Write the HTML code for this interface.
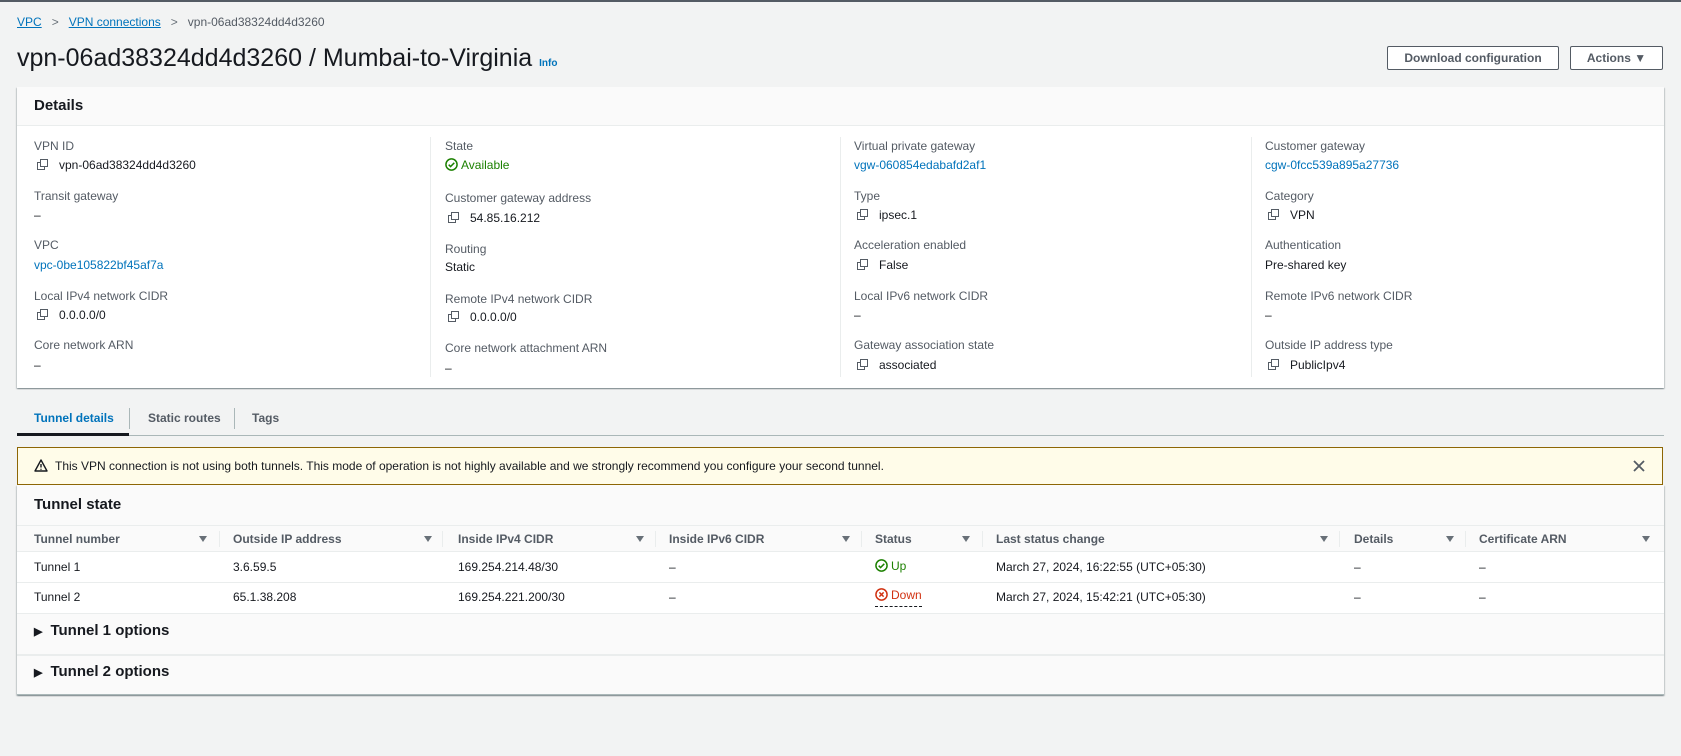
<!DOCTYPE html>
<html><head><meta charset="utf-8"><style>
*{box-sizing:border-box;margin:0;padding:0}
body{width:1681px;height:756px;background:#f2f3f3;font-family:"Liberation Sans",sans-serif;font-size:12px;color:#16191f;position:relative;overflow:hidden}
.a{position:absolute;white-space:nowrap;line-height:20px}
.lbl{color:#545b64}
.lnk{color:#0073bb}
.b{font-weight:bold}
.panel{position:absolute;background:#fff;box-shadow:0 1px 1px 0 rgba(0,28,36,.3),1px 1px 1px 0 rgba(0,28,36,.15),-1px 1px 1px 0 rgba(0,28,36,.15)}
.vl{position:absolute;width:1px;background:#eaeded}
.hl{position:absolute;height:1px;background:#eaeded}
.cp{display:inline-block;width:11px;height:11px;position:relative;margin-right:11px;vertical-align:-1px}
.cp:before{content:"";position:absolute;left:0;top:3px;width:6px;height:6px;border:1.5px solid #545b64}
.cp:after{content:"";position:absolute;left:3px;top:0;width:6px;height:6px;border:1.5px solid #545b64;background:#fff}
.btn{position:absolute;border:1px solid #545b64;border-radius:2px;background:#fff;font-weight:bold;color:#545b64;text-align:center;line-height:22px;font-size:12px}
.tri{position:absolute;width:0;height:0;border-left:4px solid transparent;border-right:4px solid transparent;border-top:6px solid #687078}
.th{position:absolute;top:529px;line-height:20px;font-weight:bold;color:#545b64}
</style></head><body>
<div style="position:absolute;left:0;top:0;width:1681px;height:2px;background:#545b64"></div>
<div class="a" style="left:17px;top:12px;font-size:12px"><span class="lnk" style="text-decoration:underline">VPC</span><span style="color:#687078;margin:0 10px">&gt;</span><span class="lnk" style="text-decoration:underline">VPN connections</span><span style="color:#687078;margin:0 10px">&gt;</span><span style="color:#545b64">vpn-06ad38324dd4d3260</span></div>
<div class="a" style="left:17px;top:43px;font-size:25px;line-height:30px">vpn-06ad38324dd4d3260 / Mumbai-to-Virginia <span class="lnk b" style="font-size:10px">Info</span></div>
<div class="btn" style="left:1387px;top:46px;width:172px;height:24px">Download configuration</div>
<div class="btn" style="left:1570px;top:46px;width:93px;height:24px">Actions &#9660;</div>

<div class="panel" style="left:17px;top:87px;width:1647px;height:301px"></div>
<div style="position:absolute;left:17px;top:87px;width:1647px;height:39px;background:#fafafa;border-bottom:1px solid #eaeded"></div>
<div class="a b" style="left:34px;top:95px;font-size:15px;line-height:22px">Details</div>
<div class="vl" style="left:430px;top:137px;height:240px"></div>
<div class="vl" style="left:840px;top:137px;height:240px"></div>
<div class="vl" style="left:1251px;top:137px;height:240px"></div>

<div class="a lbl" style="left:34px;top:136px">VPN ID</div>
<div class="a" style="left:37px;top:155px"><span class="cp"></span>vpn-06ad38324dd4d3260</div>
<div class="a lbl" style="left:34px;top:186px">Transit gateway</div>
<div class="a" style="left:34px;top:205px">–</div>
<div class="a lbl" style="left:34px;top:235px">VPC</div>
<div class="a lnk" style="left:34px;top:255px">vpc-0be105822bf45af7a</div>
<div class="a lbl" style="left:34px;top:286px">Local IPv4 network CIDR</div>
<div class="a" style="left:37px;top:305px"><span class="cp"></span>0.0.0.0/0</div>
<div class="a lbl" style="left:34px;top:335px">Core network ARN</div>
<div class="a" style="left:34px;top:355px">–</div>

<div class="a lbl" style="left:445px;top:136px">State</div>
<div class="a" style="left:445px;top:155px;color:#1d8102"><svg width="13" height="13" viewBox="0 0 14 14" style="vertical-align:-2px;margin-right:3px"><circle cx="7" cy="7" r="6" fill="none" stroke="#1d8102" stroke-width="1.6"/><path d="M4 7.2l2 2 4-4" fill="none" stroke="#1d8102" stroke-width="1.6"/></svg>Available</div>
<div class="a lbl" style="left:445px;top:188px">Customer gateway address</div>
<div class="a" style="left:448px;top:208px"><span class="cp"></span>54.85.16.212</div>
<div class="a lbl" style="left:445px;top:239px">Routing</div>
<div class="a" style="left:445px;top:257px">Static</div>
<div class="a lbl" style="left:445px;top:289px">Remote IPv4 network CIDR</div>
<div class="a" style="left:448px;top:307px"><span class="cp"></span>0.0.0.0/0</div>
<div class="a lbl" style="left:445px;top:338px">Core network attachment ARN</div>
<div class="a" style="left:445px;top:358px">–</div>

<div class="a lbl" style="left:854px;top:136px">Virtual private gateway</div>
<div class="a lnk" style="left:854px;top:155px">vgw-060854edabafd2af1</div>
<div class="a lbl" style="left:854px;top:186px">Type</div>
<div class="a" style="left:857px;top:205px"><span class="cp"></span>ipsec.1</div>
<div class="a lbl" style="left:854px;top:235px">Acceleration enabled</div>
<div class="a" style="left:857px;top:255px"><span class="cp"></span>False</div>
<div class="a lbl" style="left:854px;top:286px">Local IPv6 network CIDR</div>
<div class="a" style="left:854px;top:305px">–</div>
<div class="a lbl" style="left:854px;top:335px">Gateway association state</div>
<div class="a" style="left:857px;top:355px"><span class="cp"></span>associated</div>

<div class="a lbl" style="left:1265px;top:136px">Customer gateway</div>
<div class="a lnk" style="left:1265px;top:155px">cgw-0fcc539a895a27736</div>
<div class="a lbl" style="left:1265px;top:186px">Category</div>
<div class="a" style="left:1268px;top:205px"><span class="cp"></span>VPN</div>
<div class="a lbl" style="left:1265px;top:235px">Authentication</div>
<div class="a" style="left:1265px;top:255px">Pre-shared key</div>
<div class="a lbl" style="left:1265px;top:286px">Remote IPv6 network CIDR</div>
<div class="a" style="left:1265px;top:305px">–</div>
<div class="a lbl" style="left:1265px;top:335px">Outside IP address type</div>
<div class="a" style="left:1268px;top:355px"><span class="cp"></span>PublicIpv4</div>

<!-- tabs -->
<div class="a b lnk" style="left:34px;top:408px">Tunnel details</div>
<div class="a b" style="left:148px;top:408px;color:#545b64">Static routes</div>
<div class="a b" style="left:252px;top:408px;color:#545b64">Tags</div>
<div class="vl" style="left:129px;top:408px;height:21px;background:#aab7b8"></div>
<div class="vl" style="left:234px;top:408px;height:21px;background:#aab7b8"></div>
<div class="hl" style="left:17px;top:435px;width:1647px;background:#aab7b8"></div>
<div style="position:absolute;left:17px;top:433px;width:112px;height:3px;background:#16191f"></div>

<!-- tunnel panel -->
<div class="panel" style="left:17px;top:485px;width:1647px;height:210px"></div>
<div style="position:absolute;left:17px;top:485px;width:1647px;height:41px;background:#fafafa;border-bottom:1px solid #eaeded"></div>
<div class="a b" style="left:34px;top:494px;font-size:15px;line-height:22px">Tunnel state</div>
<div style="position:absolute;left:17px;top:526px;width:1647px;height:26px;background:#fafafa;border-bottom:1px solid #eaeded"></div>
<div class="th" style="left:34px">Tunnel number</div>
<div class="th" style="left:233px">Outside IP address</div>
<div class="th" style="left:458px">Inside IPv4 CIDR</div>
<div class="th" style="left:669px">Inside IPv6 CIDR</div>
<div class="th" style="left:875px">Status</div>
<div class="th" style="left:996px">Last status change</div>
<div class="th" style="left:1354px">Details</div>
<div class="th" style="left:1479px">Certificate ARN</div>
<div class="tri" style="left:199px;top:536px"></div>
<div class="tri" style="left:424px;top:536px"></div>
<div class="tri" style="left:636px;top:536px"></div>
<div class="tri" style="left:842px;top:536px"></div>
<div class="tri" style="left:962px;top:536px"></div>
<div class="tri" style="left:1320px;top:536px"></div>
<div class="tri" style="left:1446px;top:536px"></div>
<div class="tri" style="left:1642px;top:536px"></div>
<div class="vl" style="left:219px;top:531px;height:16px"></div>
<div class="vl" style="left:442px;top:531px;height:16px"></div>
<div class="vl" style="left:655px;top:531px;height:16px"></div>
<div class="vl" style="left:861px;top:531px;height:16px"></div>
<div class="vl" style="left:982px;top:531px;height:16px"></div>
<div class="vl" style="left:1339px;top:531px;height:16px"></div>
<div class="vl" style="left:1465px;top:531px;height:16px"></div>

<div class="a" style="left:34px;top:557px">Tunnel 1</div>
<div class="a" style="left:233px;top:557px">3.6.59.5</div>
<div class="a" style="left:458px;top:557px">169.254.214.48/30</div>
<div class="a" style="left:669px;top:557px">–</div>
<div class="a" style="left:875px;top:556px;color:#1d8102"><svg width="13" height="13" viewBox="0 0 14 14" style="vertical-align:-2px;margin-right:3px"><circle cx="7" cy="7" r="6" fill="none" stroke="#1d8102" stroke-width="1.6"/><path d="M4 7.2l2 2 4-4" fill="none" stroke="#1d8102" stroke-width="1.6"/></svg>Up</div>
<div class="a" style="left:996px;top:557px">March 27, 2024, 16:22:55 (UTC+05:30)</div>
<div class="a" style="left:1354px;top:557px">–</div>
<div class="a" style="left:1479px;top:557px">–</div>
<div class="hl" style="left:17px;top:582px;width:1647px"></div>
<div class="a" style="left:34px;top:587px">Tunnel 2</div>
<div class="a" style="left:233px;top:587px">65.1.38.208</div>
<div class="a" style="left:458px;top:587px">169.254.221.200/30</div>
<div class="a" style="left:669px;top:587px">–</div>
<div class="a" style="left:875px;top:585px;color:#d13212;border-bottom:1px dashed #16191f;line-height:21px"><svg width="13" height="13" viewBox="0 0 14 14" style="vertical-align:-2px;margin-right:3px"><circle cx="7" cy="7" r="6" fill="none" stroke="#d13212" stroke-width="1.6"/><path d="M4.7 4.7l4.6 4.6M9.3 4.7l-4.6 4.6" stroke="#d13212" stroke-width="1.6"/></svg>Down</div>
<div class="a" style="left:996px;top:587px">March 27, 2024, 15:42:21 (UTC+05:30)</div>
<div class="a" style="left:1354px;top:587px">–</div>
<div class="a" style="left:1479px;top:587px">–</div>
<div class="hl" style="left:17px;top:613px;width:1647px"></div>
<div style="position:absolute;left:17px;top:614px;width:1647px;height:81px;background:#fafafa"></div>
<div class="hl" style="left:17px;top:654px;width:1647px;height:2px"></div>
<div class="a b" style="left:34px;top:621px;font-size:15px"><span style="font-size:11px;margin-right:8px">&#9654;</span>Tunnel 1 options</div>
<div class="a b" style="left:34px;top:662px;font-size:15px"><span style="font-size:11px;margin-right:8px">&#9654;</span>Tunnel 2 options</div>
<div class="hl" style="left:17px;top:694px;width:1647px;background:#aab7b8"></div>

<!-- alert -->
<div style="position:absolute;left:17px;top:447px;width:1646px;height:38px;background:#fffce9;border:1px solid #8d6605"></div>
<svg style="position:absolute;left:34px;top:459px" width="14" height="13" viewBox="0 0 14 13"><path d="M7 1L1 12h12z" fill="none" stroke="#16191f" stroke-width="1.4" stroke-linejoin="round"/><path d="M7 5v3.5M7 9.8v1" stroke="#16191f" stroke-width="1.4"/></svg>
<div class="a" style="left:55px;top:456px">This VPN connection is not using both tunnels. This mode of operation is not highly available and we strongly recommend you configure your second tunnel.</div>
<svg style="position:absolute;left:1633px;top:460px" width="12" height="12" viewBox="0 0 12 12"><path d="M1 1l10 10M11 1L1 11" stroke="#545b64" stroke-width="1.8"/></svg>
</body></html>
